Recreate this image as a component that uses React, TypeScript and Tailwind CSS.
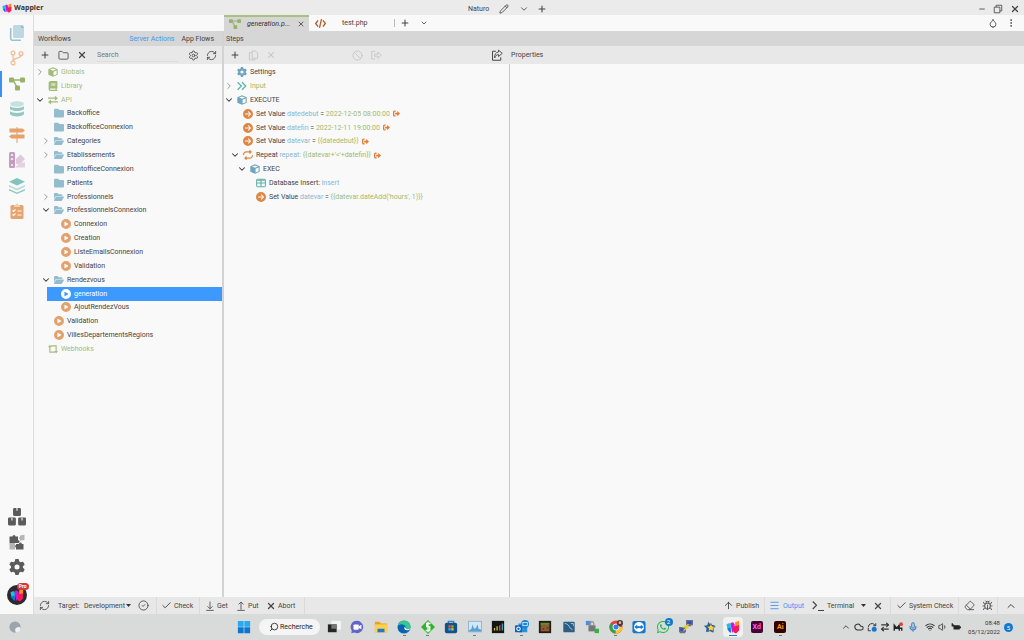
import React from 'react';
import { ChevronDown, ChevronRight, ChevronUp, Plus, X, Minus, Folder, RefreshCw, Copy, Ban, Check, CircleCheck, ArrowUp, Menu, Eraser, Bug, Pencil, Droplet, EllipsisVertical, Settings, Search, Wifi, Volume1, Mic, Cloud, ArrowRightLeft } from 'lucide-react';
import { FaFolder, FaFolderOpen, FaCirclePlay, FaCircleArrowRight, FaRepeat, FaGear, FaBook, FaWhatsapp } from 'react-icons/fa6';

type SvgProps = { children: React.ReactNode; className?: string; box?: string };

function Svg({ children, className = 'size-4', box = '0 0 16 16' }: SvgProps) {
  return (
    <svg viewBox={box} className={`shrink-0 ${className}`} fill="none" aria-hidden="true">
      {children}
    </svg>
  );
}

const Cube = () => (
  <Svg className="size-2.5">
    <path d="M8 .5 15.500 3.500v9L8 15.500.5 12.500v-9z" fill="currentColor" />
    <path d="M8 2.200 12.800 4 8 6 3.200 4z" fill="#f9f9f9" />
    <path d="M8.900 7.600 13.800 5.700v5.700L8.900 13.400z" fill="#f9f9f9" />
  </Svg>
);

const Swap = () => (
  <Svg className="size-2.5">
    <path d="M0 5h13M16 11H3" stroke="currentColor" strokeWidth="2" />
    <path d="m11 1 5 4-5 4zM5 7l-5 4 5 4z" fill="currentColor" />
  </Svg>
);

const Hook = () => (
  <Svg className="size-2.5">
    <path d="M3 3v10h8M5 3h8v9" stroke="currentColor" strokeWidth="1.800" />
    <path d="M0 5l3-4 3 4zM10 11l3 4 3-4z" fill="currentColor" />
  </Svg>
);

const DoubleChevron = () => (
  <Svg className="size-2.5">
    <path d="m1 2 6 6-6 6M8 2l6 6-6 6" stroke="#5bb5ab" strokeWidth="2" />
  </Svg>
);

const Table = () => (
  <Svg className="size-2.5">
    <rect x="1" y="2" width="14" height="12" rx="1" fill="#f9f9f9" stroke="#5fb0a5" strokeWidth="1.600" />
    <path d="M1 3.500h14M1 8h14M8 2v12" stroke="#5fb0a5" strokeWidth="1.800" />
  </Svg>
);

const Exit = () => (
  <Svg className="ml-[3px] size-[7px]">
    <path d="M6 2.500H3.500A2 2 0 0 0 1.500 4.500v7a2 2 0 0 0 2 2H6" stroke="#de7d38" strokeWidth="3" />
    <path d="M5 6h4.500V2L16 8l-6.500 6v-4H5z" fill="#de7d38" />
  </Svg>
);

const Flow = ({ className }: { className: string }) => (
  <Svg className={className}>
    <path d="M3 4h10M4 4l4.500 8" stroke="currentColor" strokeWidth="1.500" />
    <rect y="1.500" width="5" height="5" rx="1" fill="currentColor" />
    <rect x="11" y="1.500" width="5" height="5" rx="1" fill="currentColor" />
    <rect x="6" y="9.500" width="5" height="5" rx="1" fill="currentColor" />
  </Svg>
);

const WapplerMark = ({ className }: { className: string }) => (
  <Svg className={className}>
    <path d="M.5 5 3.500 3.500 5.500 5v8L2 11z" fill="#17c3e8" />
    <path d="M1.500 10 5 8.500 6 14.500l-2-.5z" fill="#1773e0" />
    <path d="M5 3.500 8 2.500 10 5v7l-3 2.500z" fill="#d316d8" />
    <path d="M10.500 2.500 15 .8V7l-4.500 1z" fill="#ff8a1c" />
    <path d="M9.500 7 15 6v6l-3.500 3.500L8.500 14z" fill="#f5195c" />
  </Svg>
);

const Share = ({ className }: { className: string }) => (
  <Svg className={className}>
    <path d="M6.500 3H2v12h11v-4" stroke="currentColor" strokeWidth="1.300" />
    <path d="M10 1.500 15 5.800 10 10V7.500C7.500 7.500 6 9 4.800 12 4.800 7 6.500 4.200 10 4z" stroke="currentColor" strokeWidth="1.200" />
  </Svg>
);

const arrowDown = (
  <Svg className="size-2.5"><path d="M8 1v11M4 8.500 8 12.500l4-4M2 15h12" stroke="currentColor" strokeWidth="1.300" /></Svg>
);
const arrowUpBar = (
  <Svg className="size-2.5"><path d="M8 14V2M4 5.500 8 1.500l4 4M2 15h12" stroke="currentColor" strokeWidth="1.300" /></Svg>
);

const railTop = [
  { name: 'Pages', icon: <Svg><rect x="4" width="11" height="13" rx="1.500" fill="#bdd7e3" /><path d="M1.700 3v10.500a1.800 1.800 0 0 0 1.800 1.800H12" stroke="#98c1d5" strokeWidth="1.600" /><path d="M12 0l3 3h-3z" fill="#8fbacf" /></Svg> },
  { name: 'Git', icon: <Svg><g stroke="#f0bd92" strokeWidth="1.300"><circle cx="4" cy="3" r="1.900" /><circle cx="12" cy="3.500" r="1.900" /><circle cx="4" cy="13" r="1.900" /><path d="M4 5v6M12 5.500C12 9 4.500 7 4 11" /></g></Svg> },
  { name: 'Workflows', icon: <span className="text-[#97b267]"><Flow className="size-4" /></span>, active: true },
  { name: 'Database', icon: <Svg><ellipse cx="8" cy="3" rx="7" ry="2.700" fill="#c6e1dd" /><path d="M1 5.200c3 2.300 11 2.300 14 0v3c-3 2.400-11 2.400-14 0z" fill="#93c9c2" /><path d="M1 10.200c3 2.300 11 2.300 14 0v3c-3 2.900-11 2.900-14 0z" fill="#93c9c2" /></Svg> },
  { name: 'Routes', icon: <Svg><path d="M8 0v16" stroke="#efc5a1" strokeWidth="1.800" /><path d="M.5 1.500h13L16 3.500l-2.500 2H.5zM15.500 7.500h-13L0 9.500l2.500 2h13z" fill="#e5a26c" /></Svg> },
  { name: 'Design', icon: <Svg><path d="M7 12V7l4.500-4.500L16 7l-5 5z" fill="#dfc9dd" /><path d="M6 15.500 11.500 10.500H16v5z" fill="#e4d1e2" /><rect y="0" width="6" height="16" rx="1.500" fill="#c59cc0" /><path d="M1.800 3h2.400M1.800 7h2.400" stroke="#f9f9f9" strokeWidth="1.400" /><circle cx="3" cy="13" r="1" fill="#f9f9f9" /></Svg> },
  { name: 'Layers', icon: <Svg><path d="M8 0l8 3.700-8 3.700-8-3.700z" fill="#82c4bd" /><path d="m0 7 8 3.600L16 7v1.800l-8 3.700-8-3.700z" fill="#b9ddd9" /><path d="m0 11 8 3.500 8-3.500v1.400L8 16l-8-3.600z" fill="#8bc8c1" /></Svg> },
  { name: 'Tasks', icon: <Svg><rect x="1.500" y="2" width="13" height="14" rx="1.500" fill="#e5a46f" /><path d="M5 4V2h1.500a1.500 1.500 0 0 1 3 0H11v2z" fill="#f1cfb2" /><path d="m3.500 7.500 1 1 2-2M3.500 11.500l1 1 2-2M8.500 8h4M8.500 12h4" stroke="#f9f9f9" strokeWidth="1.200" /></Svg> },
];

const railBottom = [
  { name: 'Packages', icon: <Svg className="size-[18px]"><g fill="#5b5b5b"><rect x="4.500" y="0" width="7" height="7" rx="1" /><rect x="0" y="8.500" width="7" height="7" rx="1" /><rect x="9" y="8.500" width="7" height="7" rx="1" /></g><path d="M8 0v2.500M3.500 8.500V11M12.500 8.500V11" stroke="#bbb" strokeWidth="1.600" /></Svg> },
  { name: 'Extensions', icon: <Svg><path d="M.5 2.500h3a1.500 1.500 0 0 1 3 0H9V6a1.500 1.500 0 0 1 0 3H.5z" fill="#5b5b5b" /><path d="M.5 9H6v6.500H.5z" fill="#b5b5b5" /><path d="M7 10h3a1.400 1.400 0 0 1 2.800 0h1.700v5.500H7v-2a1.300 1.300 0 0 1 0-2.500z" fill="#5b5b5b" /><path d="M11 1.500 15.500.8V6l-4.500.8V5a1 1 0 0 1 0-2z" fill="#b5b5b5" /></Svg> },
  { name: 'Settings', icon: <FaGear className="size-4 text-[#5b5b5b]" /> },
];

type Row = { label: string; indent: string; icon: React.ReactNode; open?: boolean; tone?: string; selected?: boolean };

const shut = <FaFolder className="size-2.5 text-[#93bccf]" />;
const opened = <FaFolderOpen className="size-2.5 text-[#93bccf]" />;
const play = <FaCirclePlay className="size-2.5 text-[#e2a26d]" />;
const green = 'text-[#a3bb77]';

const tree: Row[] = [
  { label: 'Globals', indent: 'ml-0', icon: <Cube />, open: false, tone: green },
  { label: 'Library', indent: 'ml-0', icon: <FaBook className="size-2.5" />, tone: green },
  { label: 'API', indent: 'ml-0', icon: <Swap />, open: true, tone: green },
  { label: 'Backoffice', indent: 'ml-1.5', icon: shut },
  { label: 'BackofficeConnexion', indent: 'ml-1.5', icon: shut },
  { label: 'Categories', indent: 'ml-1.5', icon: opened, open: false },
  { label: 'Etablissements', indent: 'ml-1.5', icon: opened, open: false },
  { label: 'FrontofficeConnexion', indent: 'ml-1.5', icon: shut },
  { label: 'Patients', indent: 'ml-1.5', icon: shut },
  { label: 'Professionnels', indent: 'ml-1.5', icon: opened, open: false },
  { label: 'ProfessionnelsConnexion', indent: 'ml-1.5', icon: opened, open: true },
  { label: 'Connexion', indent: 'ml-[13px]', icon: play },
  { label: 'Creation', indent: 'ml-[13px]', icon: play },
  { label: 'ListeEmailsConnexion', indent: 'ml-[13px]', icon: play },
  { label: 'Validation', indent: 'ml-[13px]', icon: play },
  { label: 'Rendezvous', indent: 'ml-1.5', icon: opened, open: true },
  { label: 'generation', indent: 'ml-[13px]', icon: <FaCirclePlay className="size-2.5 text-white" />, selected: true },
  { label: 'AjoutRendezVous', indent: 'ml-[13px]', icon: play },
  { label: 'Validation', indent: 'ml-1.5', icon: play },
  { label: 'VillesDepartementsRegions', indent: 'ml-1.5', icon: play },
  { label: 'Webhooks', indent: 'ml-0', icon: <Hook />, tone: green },
];

type Step = { indent: string; icon: React.ReactNode; open?: boolean; text?: string; name?: string; join?: string; value?: string; out?: boolean };

const go = <FaCircleArrowRight className="size-2.5 text-[#de8744]" />;
const blueCube = <span className="text-[#6fa5be]"><Cube /></span>;

const steps: Step[] = [
  { indent: 'ml-0', icon: <FaGear className="size-2.5 text-[#6fa5be]" />, text: 'Settings' },
  { indent: 'ml-0', icon: <DoubleChevron />, open: false, value: 'Input' },
  { indent: 'ml-0', icon: blueCube, open: true, text: 'EXECUTE' },
  { indent: 'ml-1.5', icon: go, text: 'Set Value', name: 'datedebut', join: ' = ', value: '2022-12-05 08:00:00', out: true },
  { indent: 'ml-1.5', icon: go, text: 'Set Value', name: 'datefin', join: ' = ', value: '2022-12-11 19:00:00', out: true },
  { indent: 'ml-1.5', icon: go, text: 'Set Value', name: 'datevar', join: ' = ', value: '{{datedebut}}', out: true },
  { indent: 'ml-1.5', icon: <FaRepeat className="size-2.5 text-[#de8744]" />, open: true, text: 'Repeat', name: 'repeat:', join: ' ', value: "{{datevar+'<'+datefin}}", out: true },
  { indent: 'ml-[13px]', icon: blueCube, open: true, text: 'EXEC' },
  { indent: 'ml-[19px]', icon: <Table />, text: 'Database Insert:', name: 'insert' },
  { indent: 'ml-[19px]', icon: go, text: 'Set Value', name: 'datevar', join: ' = ', value: "{{datevar.dateAdd('hours', 1)}}" },
];

function Toggle({ open }: { open?: boolean }) {
  if (open === undefined) return null;
  return open ? <ChevronDown className="size-2.5 text-[#333]" strokeWidth={2.5} /> : <ChevronRight className="size-2.5 text-[#888]" strokeWidth={2} />;
}

function IconButton({ label, children, className = '' }: { label: string; children: React.ReactNode; className?: string }) {
  return (
    <button type="button" aria-label={label} className={`flex shrink-0 items-center justify-center ${className}`}>
      {children}
    </button>
  );
}

const appIcons = [
  { name: 'Task view', icon: <Svg><path d="M5 1h11v10H5z" fill="#f4f4f4" /><path d="M1 5h10v9H1z" fill="#252525" /><path d="M5 5h6v5H5z" fill="#777" /></Svg> },
  { name: 'Chat', icon: <Svg><path d="M8 1a7 7 0 1 1-3 13.300L1.500 15 2 12A7 7 0 0 1 8 1z" fill="#6264c7" /><rect x="4" y="5" width="6" height="6" rx="1" fill="#fff" /><path d="m10 7 3-1.500v5L10 9z" fill="#fff" /></Svg> },
  { name: 'Files', icon: <Svg><path d="M1 2h5l2 2h7v10H1z" fill="#e9a21b" /><path d="M1 5h14v9H1z" fill="#ffd04f" /><path d="M4 10h8v4H4z" fill="#1f79c9" /></Svg> },
  { name: 'Edge', run: true, icon: <Svg><circle cx="8" cy="8" r="7.500" fill="#1680cd" /><path d="M1 6C3-1 14-1 15.500 7c.3 3-3 4-5.500 3 1-3-1-5-4-5-2 0-4 .5-5 1z" fill="#37c98b" /><path d="M1 7c3-3 8-2 8 1-1 2 1 4 5 3-3 5-9 5-12 1z" fill="#0f5fae" /><path d="M8.500 8c-1 3 2 4.500 5.500 3l1-1.500C13 11 10 11 10 9z" fill="#fff" /></Svg> },
  { name: 'Dreamweaver', run: true, icon: <Svg><path d="M8 0l8 8-8 8-8-8z" fill="#2fb52b" /><path d="M11 4H6.500v3.500H10V12H5.500M8 2v12" stroke="#fff" strokeWidth="1.500" /></Svg> },
  { name: 'Store', icon: <Svg><path d="M5 4V1.500h6V4" stroke="#2d87c8" strokeWidth="1.500" /><rect x="1" y="3" width="14" height="12" rx="2" fill="#14508a" /><path d="M5 6h2.700v2.700H5z" fill="#f35325" /><path d="M8.300 6H11v2.700H8.300z" fill="#81bc06" /><path d="M5 9.300h2.700V12H5z" fill="#35a8f0" /><path d="M8.300 9.300H11V12H8.300z" fill="#ffba08" /></Svg> },
  { name: 'Monitor', run: true, icon: <Svg><rect x=".5" y="1.500" width="15" height="12" fill="#d3e6f5" stroke="#8fb0c9" /><path d="M1 12l3-2 1-5 2 5 2-1 2-4 1 5 3 1v2H1z" fill="#5a9fd6" /></Svg> },
  { name: 'Equalizer', icon: <Svg><rect x="1" y="1" width="14" height="14" fill="#151515" /><path d="M4 12V9M7 12V7" stroke="#d8bf24" strokeWidth="1.500" /><path d="M10 12V6" stroke="#e0504a" strokeWidth="1.500" /><path d="M13 12V4" stroke="#31a4bf" strokeWidth="1.500" /></Svg> },
  { name: 'Outlook', run: true, icon: <Svg><rect x="4" y="4" width="10" height="10" fill="#2c8fdc" /><rect y="6" width="8" height="8" rx="1" fill="#0c62b8" /><circle cx="4" cy="10" r="2" stroke="#fff" strokeWidth="1.200" /><circle cx="11.500" cy="4.500" r="4.500" fill="#1682d6" /><rect x="9" y="3" width="5" height="3.500" stroke="#fff" strokeWidth=".8" /></Svg> },
  { name: 'Craft', icon: <Svg><rect x="1" y="1" width="14" height="14" fill="#231a14" /><path d="M3 4h10v9H3z" fill="#8c5a35" /><path d="M3 3h10v2h-2v1H9V5H6v1H4V5H3z" fill="#5f8b35" /><path d="M5 9h2v2H5zM10 8h2v2h-2z" fill="#65401f" /></Svg> },
  { name: 'Workbench', icon: <Svg><rect x="1.500" y="2" width="13" height="12" rx="1" fill="#2c5e84" /><path d="M3 4c3 0 5 2 6 5l3 2M10 4h3v3" stroke="#a9c9dd" /></Svg> },
  { name: 'Remote lock', icon: <Svg><rect x="1" y="1" width="6" height="5" fill="#4b8edb" /><rect x="4" y="6" width="8" height="7" fill="#777" /><path d="M6 6V4a2 2 0 0 1 4 0v2" stroke="#999" strokeWidth="1.500" /><rect x="11" y="10" width="5" height="5" fill="#32b445" /></Svg> },
  { name: 'Chrome', run: true, icon: <Svg><circle cx="8" cy="8" r="7.500" fill="#e4423a" /><path d="M8 8 1.500 4.200A7.500 7.500 0 0 0 7.500 15.500z" fill="#2fa351" /><path d="M8 8h7.500a7.500 7.500 0 0 1-8 7.500z" fill="#f8c925" /><circle cx="8" cy="8" r="3.500" fill="#3b7ded" stroke="#fff" /><circle cx="12.500" cy="3.500" r="3.500" fill="#4b3831" /><circle cx="12.500" cy="3" r="1.500" fill="#e0b79d" /></Svg> },
  { name: 'TeamViewer', icon: <Svg><rect x=".5" y="1" width="15" height="14" rx="2" fill="#1778d3" /><circle cx="8" cy="8" r="5.800" fill="#fff" /><path d="m2.500 8 3.500-2.500V7h4V5.500L13.500 8 10 10.500V9H6v1.500z" fill="#1778d3" /></Svg> },
  { name: 'WhatsApp', icon: <FaWhatsapp className="text-[#28b956]" />, badge: '2' },
  { name: 'PuTTY', icon: <Svg><path d="M8 0h8v6h-2v1H9V6H8zM0 8h8v6H7v1H1v-1H0z" fill="#6a7087" /><path d="M9.500 1.500h5v3h-5zM1.500 9.500h5v3h-5z" fill="#2f4fc0" /><path d="m11 5-5 3h4l-5 4" stroke="#e4d02b" strokeWidth="1.500" /></Svg> },
  { name: 'Star', icon: <Svg><path d="m6 2 2.500 3.500 5 .5-3 3.500 1.500 5-4.500-2L3.500 14l.5-4.500L1 6.500 5 6z" fill="#285a9f" /><path d="m9 4 1.500 3 3.500.5-2.500 2.200.7 3.300L9 11.500 6 13l.6-3.300L4 7.500 7.500 7z" fill="#ffd330" stroke="#285a9f" strokeWidth=".8" /></Svg> },
  { name: 'Wappler', active: true, icon: <WapplerMark className="size-3.5" /> },
];

const adobeIcons = [
  { label: 'Xd', tone: 'bg-[#470137] text-[#ff61f6]' },
  { label: 'Ai', tone: 'bg-[#330000] text-[#ff9a00]', run: true },
];

export default function App() {
  return (
    <div className="flex h-screen flex-col overflow-hidden bg-[#f9f9f9] font-[Roboto,'Noto_Sans',sans-serif] text-[7px] leading-[10px] text-[#444]">
      <header className="grid h-[15px] shrink-0 grid-cols-[1fr_88px_1fr] items-center bg-[#ebebeb]">
        <div className="flex items-center gap-0.5 pl-0.5">
          <WapplerMark className="size-2.5" />
          <strong className="font-['Open_Sans',sans-serif] text-[7px] font-bold text-[#333]">Wappler</strong>
        </div>
        <div className="flex items-center pt-0.5">
          <span className="w-[31px]">Naturo</span>
          <IconButton label="Edit project" className="w-2.5"><Pencil className="size-2.5" strokeWidth={2} /></IconButton>
          <IconButton label="Projects" className="ml-2.5 w-2.5"><ChevronDown className="size-3" strokeWidth={2} /></IconButton>
          <IconButton label="New project" className="ml-2 w-2.5"><Plus className="size-2.5" strokeWidth={2.5} /></IconButton>
        </div>
        <div className="flex items-center justify-end gap-[7px] pt-0.5 pr-1">
          <IconButton label="Minimize"><Minus className="size-2" strokeWidth={2.5} /></IconButton>
          <IconButton label="Restore"><Svg className="size-2.5"><path d="M2 5h9v9H2zM5 5V2h9v9h-3" stroke="currentColor" strokeWidth="1.300" /></Svg></IconButton>
          <IconButton label="Close"><X className="size-2.5" strokeWidth={3} /></IconButton>
        </div>
      </header>

      <div className="flex min-h-0 flex-1">
        <nav aria-label="Main" className="flex w-[34px] shrink-0 flex-col justify-between border-r border-[#dcdcdc] pt-[5px] pb-[3px]">
          <div className="grid h-[204px] auto-rows-fr">
            {railTop.map((item) => (
              <button key={item.name} type="button" aria-label={item.name} className={`flex items-center justify-center border-l-2 pr-0.5 ${item.active ? 'border-[#3b8ff5]' : 'border-transparent'}`}>
                {item.icon}
              </button>
            ))}
          </div>
          <div className="flex flex-col">
            {railBottom.map((item) => (
              <IconButton key={item.name} label={item.name} className="h-[25px]">{item.icon}</IconButton>
            ))}
            <IconButton label="Account" className="h-8">
              <span className="relative flex size-5 items-center justify-center rounded-full bg-[#2b2b2b]">
                <WapplerMark className="size-3.5" />
                <span className="absolute -top-0.5 -right-0.5 rounded-full bg-[#d23b3b] px-0.5 text-[5px] leading-[7px] font-bold text-white">Pro</span>
              </span>
            </IconButton>
          </div>
        </nav>

        <div className="flex min-w-0 flex-1 flex-col">
          <div className="flex min-h-0 flex-1">
            <aside className="flex w-[188px] shrink-0 flex-col pt-4">
              <div className="flex h-[15px] shrink-0 items-center bg-[#d6d6d6] px-1">
                <h2>Workflows</h2>
                <div className="ml-auto flex gap-[7px] pr-1">
                  <button type="button" className="text-[#4795f3]">Server Actions</button>
                  <button type="button">App Flows</button>
                </div>
              </div>
              <div className="flex h-[18px] shrink-0 items-center bg-[#e8e8e8] pl-1.5">
                <IconButton label="Add"><Plus className="size-2.5" strokeWidth={2.5} /></IconButton>
                <IconButton label="New folder" className="ml-2"><Folder className="size-[11px]" strokeWidth={1.8} /></IconButton>
                <IconButton label="Delete" className="ml-2"><X className="size-2.5" strokeWidth={3} /></IconButton>
                <input aria-label="Search" placeholder="Search" className="mx-2.5 h-3.5 min-w-0 flex-1 border-b border-[#dcdcdc] bg-transparent text-[7px] outline-none placeholder:text-[#777]" />
                <IconButton label="Options"><Settings className="size-[11px]" strokeWidth={1.8} /></IconButton>
                <IconButton label="Refresh" className="mr-[5px] ml-[7px]"><RefreshCw className="size-[11px]" strokeWidth={1.8} /></IconButton>
              </div>
              <ul className="mt-px grid h-[291px] shrink-0 auto-rows-fr">
                {tree.map((row, i) => (
                  <li key={i} className={row.indent}>
                    <button type="button" className={`flex size-full items-center text-left ${row.selected ? 'bg-[#3d99fd] text-white' : row.tone ?? ''}`}>
                      <span className="flex w-3 justify-center"><Toggle open={row.open} /></span>
                      <span className="mr-[3px] ml-0.5">{row.icon}</span>
                      {row.label}
                    </button>
                  </li>
                ))}
              </ul>
            </aside>

            <div className="mt-4 w-0.5 shrink-0 bg-[#d3d3d3]" />

            <main className="flex min-w-0 flex-1 flex-col">
              <div className="flex h-4 shrink-0 items-stretch">
                <div className="flex w-[85px] items-center border-t-2 border-[#a8c080] bg-[#d6d6d6] pl-[5px]">
                  <span className="text-[#97b267]"><Flow className="size-3" /></span>
                  <button type="button" className="ml-1.5 text-[#333] italic">generation.p...</button>
                  <IconButton label="Close tab" className="mr-1 ml-auto"><X className="size-2" strokeWidth={2.5} /></IconButton>
                </div>
                <div className="flex w-[85px] items-center">
                  <Svg className="ml-1.5 size-[11px]"><path d="M4.500 3.500 1 8l3.500 4.500M11.500 3.500 15 8l-3.500 4.500M9.500 1.500l-3 13" stroke="#b45a2c" strokeWidth="1.900" /></Svg>
                  <button type="button" className="ml-4">test.php</button>
                </div>
                <div className="my-1 flex flex-1 items-center border-l border-[#bbb] pl-[5px]">
                  <IconButton label="New tab"><Plus className="size-2.5" strokeWidth={2.5} /></IconButton>
                  <IconButton label="All tabs" className="ml-2.5"><ChevronDown className="size-2" strokeWidth={2.5} /></IconButton>
                  <IconButton label="Theme" className="mr-2 ml-auto"><Droplet className="size-2.5" strokeWidth={2} /></IconButton>
                  <IconButton label="More" className="mr-2"><EllipsisVertical className="size-2.5" strokeWidth={2} /></IconButton>
                </div>
              </div>
              <h2 className="h-[15px] shrink-0 bg-[#d6d6d6] pt-[3px] pl-0.5">Steps</h2>
              <div className="flex min-h-0 flex-1">
                <section className="flex w-[286px] shrink-0 flex-col">
                  <div className="flex h-[18px] shrink-0 items-center bg-[#e8e8e8] pl-1.5 text-[#c4c4c4]">
                    <IconButton label="Add step" className="text-[#444]"><Plus className="size-2.5" strokeWidth={2.5} /></IconButton>
                    <IconButton label="Copy" className="ml-2">
                      <Svg className="size-[11px]"><path d="M6 1.500h5L14 4.500V12H6zM6 4H2v10.500h8V12" stroke="currentColor" strokeWidth="1.300" /></Svg>
                    </IconButton>
                    <IconButton label="Delete step" className="ml-[7px]"><X className="size-2.5" strokeWidth={2.5} /></IconButton>
                    <IconButton label="Disable" className="ml-19"><Ban className="size-[11px]" strokeWidth={1.8} /></IconButton>
                    <IconButton label="Output" className="ml-2">
                      <Svg className="size-[11px]"><path d="M6 2H1v11h5M5 6h5V3l5 4.500-5 4.500V9H5z" stroke="currentColor" strokeWidth="1.200" /></Svg>
                    </IconButton>
                    <IconButton label="Open in browser" className="mr-[7px] ml-auto text-[#444]"><Share className="size-3" /></IconButton>
                  </div>
                  <div className="flex-1 border-r border-[#c6c6c6]">
                    <ul className="mt-px grid h-[139px] auto-rows-fr">
                      {steps.map((step, i) => (
                        <li key={i} className={step.indent}>
                          <button type="button" className="flex size-full items-center text-left whitespace-pre">
                            <span className="flex w-2.5 justify-center"><Toggle open={step.open} /></span>
                            <span className="mx-[3px]">{step.icon}</span>
                            <span>
                              {step.text}
                              {step.name && <span className="text-[#8bb5cc]"> {step.name}</span>}
                              {step.join}
                              {step.value && <span className="text-[#a0b970]">{step.value}</span>}
                            </span>
                            {step.out && <Exit />}
                          </button>
                        </li>
                      ))}
                    </ul>
                  </div>
                </section>
                <section className="min-w-0 flex-1">
                  <h2 className="h-[18px] bg-[#e8e8e8] pt-1 pl-px">Properties</h2>
                </section>
              </div>
            </main>
          </div>

          <footer className="flex h-[17px] shrink-0 items-stretch bg-[#e8e8e8]">
            <div className="flex w-[123px] items-center border-r border-[#dadada] pl-[5px]">
              <IconButton label="Refresh target"><RefreshCw className="size-[11px]" strokeWidth={1.8} /></IconButton>
              <label htmlFor="target" className="ml-2 w-[23px]">Target:</label>
              <span className="relative ml-[3px] flex w-[47px] items-center">
                <select id="target" className="w-full appearance-none bg-transparent outline-none">
                  <option>Development</option>
                </select>
                <Svg className="pointer-events-none absolute right-0 size-[5px]"><path d="M0 3h16l-8 10z" fill="#333" /></Svg>
              </span>
              <IconButton label="Verify" className="ml-[7px]"><CircleCheck className="size-[11px]" strokeWidth={1.8} /></IconButton>
            </div>
            <button type="button" className="flex w-[43px] items-center gap-0.5 border-r border-[#dadada] pl-1"><Check className="size-[11px]" strokeWidth={2} />Check</button>
            <div className="flex items-center border-r border-[#dadada] pr-[7px] pl-[5px]">
              <button type="button" className="flex w-[31px] items-center gap-0.5">{arrowDown}Get</button>
              <button type="button" className="flex w-[30px] items-center gap-0.5">{arrowUpBar}Put</button>
              <button type="button" className="flex w-[31px] items-center gap-0.5"><X className="size-2.5" strokeWidth={3} />Abort</button>
            </div>
            <div className="ml-auto flex items-stretch">
              <button type="button" className="flex w-[42px] items-center gap-0.5 border-r border-[#dadada]"><ArrowUp className="size-[11px]" strokeWidth={2} />Publish</button>
              <div className="flex items-center border-r border-[#dadada] pl-1">
                <button type="button" className="flex w-[43px] items-center gap-[3px] text-[#4795f3]"><Menu className="size-[11px]" strokeWidth={2} />Output</button>
                <button type="button" className="flex w-[49px] items-center gap-[3px]">
                  <Svg className="size-3"><path d="m1 2 5 5-5 5M8 14h8" stroke="currentColor" strokeWidth="1.500" /></Svg>
                  Terminal
                </button>
                <IconButton label="Terminal options"><Svg className="size-[5px]"><path d="M0 3h16l-8 10z" fill="#333" /></Svg></IconButton>
                <IconButton label="Close panel" className="mr-[7px] ml-[7px]"><X className="size-2.5" strokeWidth={3} /></IconButton>
              </div>
              <button type="button" className="flex w-[68px] items-center gap-0.5 border-r border-[#dadada] pl-[5px]"><Check className="size-[11px]" strokeWidth={2} />System Check</button>
              <div className="flex w-[39px] items-center gap-[7px] border-r border-[#dadada] pl-[5px]">
                <IconButton label="Clear"><Eraser className="size-[11px]" strokeWidth={1.8} /></IconButton>
                <IconButton label="Debug"><Bug className="size-[11px]" strokeWidth={1.8} /></IconButton>
              </div>
              <IconButton label="Expand panel" className="w-[26px]"><ChevronUp className="size-3" strokeWidth={2} /></IconButton>
            </div>
          </footer>
        </div>
      </div>

      <div className="grid h-[26px] shrink-0 grid-cols-[1fr_auto_1fr] items-center bg-[#d9dada]">
        <IconButton label="Widgets" className="w-[30px]">
          <Svg className="size-3"><circle cx="8" cy="8" r="7.500" fill="#9aa5ae" /><path d="M8 11a5 5 0 0 1 7.500-2A7 7 0 0 1 9 15.500z" fill="#f1f1f1" /></Svg>
        </IconButton>
        <div className="flex items-center">
          <IconButton label="Start" className="mr-[3px] w-6">
            <Svg className="size-3.5"><path d="M1 1h6.600v6.600H1zM8.400 1H15v6.600H8.400z" fill="#27aaf0" /><path d="M1 8.400h6.600V15H1zM8.400 8.400H15V15H8.400z" fill="#0878d3" /></Svg>
          </IconButton>
          <button type="button" className="mr-0.5 flex h-4 w-[61px] items-center gap-px rounded-full bg-[#f5f5f5] pl-2.5 text-[#222]">
            <Search className="size-2.5 -scale-x-100" strokeWidth={2} />Recherche
          </button>
          <div className="grid w-[470px] grid-cols-20">
            {appIcons.map((app) => (
              <button key={app.name} type="button" aria-label={app.name} className="relative flex h-[26px] items-center justify-center">
                <span className={`flex h-5 w-5 items-center justify-center rounded-sm ${app.active ? 'bg-[#f0f0f0]' : ''} [&>svg]:size-3.5`}>{app.icon}</span>
                {app.badge && <span className="absolute top-1 right-0.5 size-2 rounded-full bg-[#1279c9] text-center text-[6px] leading-2 text-white">{app.badge}</span>}
                {app.run && <span className="absolute bottom-1 h-px w-[3px] bg-[#777]" />}
                {app.active && <span className="absolute bottom-1 h-px w-2 bg-[#1779d0]" />}
              </button>
            ))}
            {adobeIcons.map((app) => (
              <button key={app.label} type="button" className="relative flex h-[26px] items-center justify-center">
                <span className={`flex size-3 items-center justify-center rounded-xs font-bold ${app.tone}`}>{app.label}</span>
                {app.run && <span className="absolute bottom-1 h-px w-[3px] bg-[#777]" />}
              </button>
            ))}
          </div>
        </div>
        <div className="flex items-center justify-end gap-[3px] pr-[11px] text-[#333]">
          <IconButton label="Hidden icons"><ChevronUp className="size-2.5" strokeWidth={2} /></IconButton>
          <Cloud className="size-2.5" strokeWidth={2.5} />
          <Svg className="size-2.5"><path d="M2 8a6 6 0 0 1 10-4l2 2M14 2v4h-4M2 9v5h4" stroke="#333" strokeWidth="1.500" /><circle cx="11.500" cy="11.500" r="4" fill="#1279d0" /></Svg>
          <ArrowRightLeft className="size-2.5" strokeWidth={3} />
          <Svg className="size-2.5"><path d="M2 14V5l4 5 4-5v9M2 10h12v4" stroke="#222" strokeWidth="2.200" /><circle cx="13" cy="3.500" r="3" fill="#e2463d" /></Svg>
          <Mic className="ml-0.5 size-2.5 text-[#3b7fc4]" strokeWidth={2.5} />
          <span className="ml-1 flex items-center gap-[3px]">
            <Wifi className="size-2.5" strokeWidth={2.5} />
            <Volume1 className="size-2.5" strokeWidth={2} />
            <Svg className="size-2.5"><path d="M4 5h10v7H4zM14 7h2v3h-2zM1 2h2v2h2v3H1z" fill="#222" /></Svg>
          </span>
          <time className="ml-1 text-right text-[6px] leading-[9px] text-[#333]">08:48<br />05/12/2022</time>
          <span className="ml-px size-[9px] rounded-full bg-[#1279d0] text-center text-[6px] leading-[9px] text-white">5</span>
        </div>
      </div>
    </div>
  );
}
